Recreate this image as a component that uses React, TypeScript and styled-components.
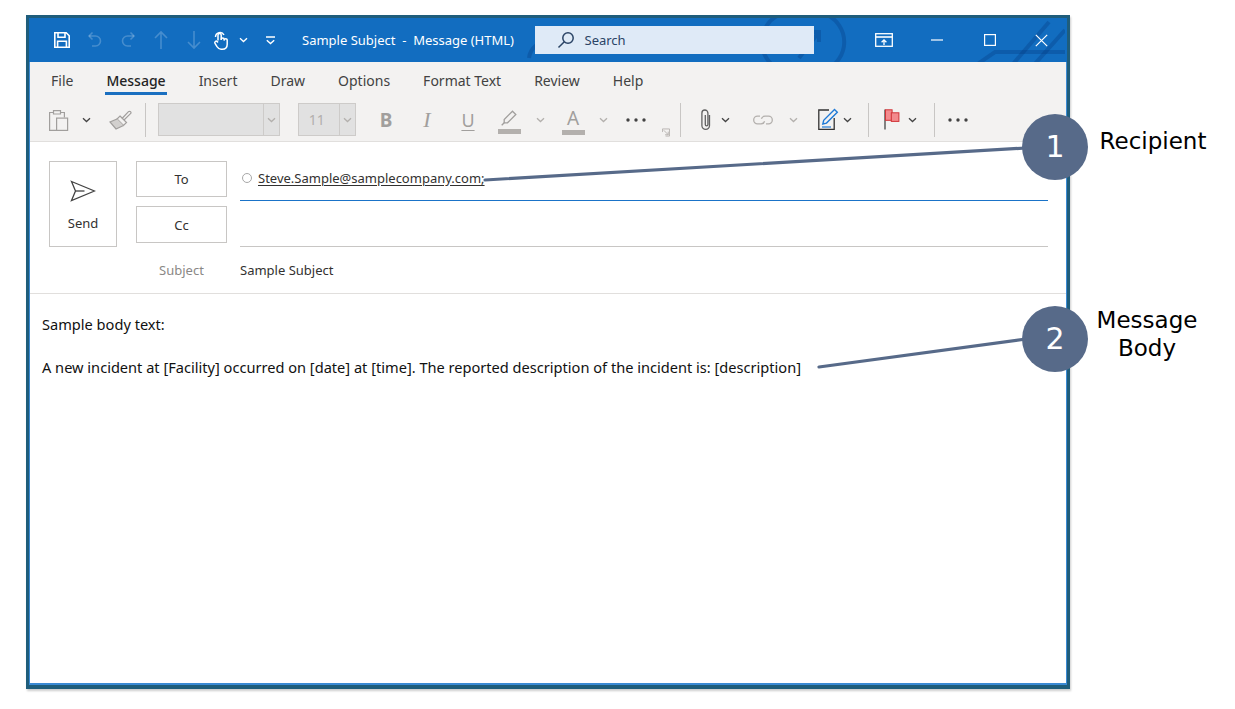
import React from "react";
import styled, { createGlobalStyle } from "styled-components";

const GlobalStyle = createGlobalStyle`
  html, body { margin: 0; padding: 0; background: #ffffff; }
  body { font-family: "Noto Sans", "Open Sans", sans-serif; color: #323130; }
  * { box-sizing: border-box; }
`;

const Page = styled.div`
  position: relative;
  width: 1235px;
  height: 709px;
  overflow: hidden;
  padding: 15px 0 0 26px;
`;

const Window = styled.div`
  width: 1044px;
  height: 674px;
  border: 3px solid #1f5d7b;
  border-bottom-width: 4px;
  display: flex;
  flex-direction: column;
  background: #ffffff;
  box-shadow: 1px 2px 2px rgba(0, 0, 0, 0.2);
`;

const Inner = styled.div`
  flex: 1;
  display: flex;
  flex-direction: column;
  border: 1px solid #3b8ad4;
  border-top: 0;
  border-bottom-width: 2px;
  min-height: 0;
`;

/* ---------- title bar ---------- */
const TitleBar = styled.div`
  position: relative;
  height: 44px;
  flex: none;
  display: flex;
  align-items: center;
  background: #126dc0;
  color: #ffffff;
  padding-left: 16.5px;
  overflow: hidden;
`;

const TitleArt = styled.svg`
  position: absolute;
  left: 0;
  top: 0;
  pointer-events: none;
`;

const QuickSlot = styled.div<{ $w: number }>`
  position: relative;
  width: ${(p) => p.$w}px;
  flex: none;
  height: 100%;
  display: flex;
  align-items: center;
  justify-content: center;
`;

const TitleText = styled.div`
  position: relative;
  width: 247px;
  flex: none;
  padding-left: 14.5px;
  font-size: 13px;
  white-space: pre;
  color: #ffffff;
`;

const SearchBox = styled.div`
  position: relative;
  width: 279px;
  height: 28px;
  flex: none;
  display: flex;
  align-items: center;
  background: #dfeaf7;
  padding-left: 22px;
  gap: 10px;
  color: #2b4466;
  font-size: 13px;
`;

const Grow = styled.div`
  flex: 1;
`;

/* ---------- ribbon ---------- */
const TabsRow = styled.div`
  height: 36px;
  flex: none;
  display: flex;
  align-items: center;
  gap: 33px;
  padding-left: 21px;
  background: #f3f2f1;
`;

const Tab = styled.div<{ $active?: boolean }>`
  position: relative;
  font-size: 14px;
  line-height: 19px;
  color: ${(p) => (p.$active ? "#242424" : "#424242")};
  font-weight: ${(p) => (p.$active ? 500 : 400)};
  &::after {
    content: "";
    display: ${(p) => (p.$active ? "block" : "none")};
    position: absolute;
    left: -1px;
    right: -1px;
    bottom: -5px;
    height: 3px;
    background: #1a6fc0;
  }
`;

const Toolbar = styled.div`
  height: 44px;
  flex: none;
  display: flex;
  align-items: center;
  padding-left: 14px;
  background: #f3f2f1;
  border-bottom: 1px solid #e1dfdd;
`;

const Slot = styled.div<{ $w: number; $ml?: number; $bottom?: boolean }>`
  width: ${(p) => p.$w}px;
  margin-left: ${(p) => p.$ml ?? 0}px;
  flex: none;
  height: 100%;
  display: flex;
  align-items: ${(p) => (p.$bottom ? "flex-end" : "center")};
  justify-content: center;
  padding-bottom: ${(p) => (p.$bottom ? 4 : 0)}px;
`;

const Separator = styled.div`
  width: 1px;
  height: 34px;
  background: #c8c6c4;
`;

const Combo = styled.div<{ $w: number; $ml: number }>`
  width: ${(p) => p.$w}px;
  margin-left: ${(p) => p.$ml}px;
  height: 33px;
  flex: none;
  display: flex;
  background: #e1e1e1;
  border: 1px solid #cdcbc9;
`;

const ComboValue = styled.div`
  flex: 1;
  display: flex;
  align-items: center;
  padding-left: 6px;
  font-size: 14px;
  color: #b3b0ad;
`;

const ComboArrow = styled.div`
  width: 16px;
  flex: none;
  display: flex;
  align-items: center;
  justify-content: center;
  border-left: 1px solid #cdcbc9;
`;

const GlyphB = styled.span`
  font-family: "Noto Sans", sans-serif;
  font-weight: 700;
  font-size: 19px;
  color: #a19f9d;
`;

const GlyphI = styled.span`
  font-family: "Liberation Serif", serif;
  font-style: italic;
  font-size: 22px;
  color: #a19f9d;
`;

const GlyphU = styled.span`
  font-family: "Noto Sans", sans-serif;
  font-size: 18px;
  color: #a19f9d;
  text-decoration: underline;
  text-underline-offset: 3px;
  text-decoration-thickness: 1px;
`;

const ColorTool = styled.div`
  display: flex;
  flex-direction: column;
  align-items: center;
  width: 23px;
  margin-top: 4px;
`;

const ColorLetter = styled.span`
  font-family: "Noto Sans", sans-serif;
  font-size: 19px;
  line-height: 20px;
  color: #a19f9d;
`;

const ColorBar = styled.div`
  width: 23px;
  height: 5px;
  background: #b3b0ad;
  margin-top: 2px;
`;

/* ---------- header ---------- */
const Header = styled.div`
  flex: none;
  display: grid;
  grid-template-columns: 87px 104px 1fr;
  grid-template-rows: 40px 46px 46px;
  padding: 19px 18px 0 19px;
  border-bottom: 1px solid #e1dfdd;
`;

const SendButton = styled.div`
  grid-row: 1 / span 2;
  grid-column: 1;
  width: 68px;
  height: 86px;
  border: 1px solid #c8c6c4;
  display: flex;
  flex-direction: column;
  align-items: center;
  padding-top: 18px;
`;

const SendLabel = styled.div`
  margin-top: 12px;
  font-size: 13px;
  line-height: 18px;
  color: #323130;
`;

const AddrButton = styled.div<{ $row: number; $h: number; $mt: number }>`
  grid-column: 2;
  grid-row: ${(p) => p.$row};
  width: 91px;
  height: ${(p) => p.$h}px;
  margin-top: ${(p) => p.$mt}px;
  border: 1px solid #c8c6c4;
  display: flex;
  align-items: center;
  justify-content: center;
  font-size: 13px;
  color: #323130;
`;

const AddrField = styled.div<{ $row: number; $line: string }>`
  grid-column: 3;
  grid-row: ${(p) => p.$row};
  border-bottom: 1px solid ${(p) => p.$line};
  display: flex;
  align-items: center;
  padding-bottom: 6px;
  padding-left: 2px;
  gap: 6px;
`;

const Presence = styled.span`
  width: 10px;
  height: 10px;
  border-radius: 50%;
  border: 1px solid #a8a8a8;
  flex: none;
`;

const EmailText = styled.span`
  font-size: 13px;
  color: #323130;
  text-decoration: underline;
  text-underline-offset: 2px;
`;

const SubjectLabel = styled.div`
  grid-column: 2;
  grid-row: 3;
  width: 91px;
  display: flex;
  align-items: center;
  justify-content: center;
  font-size: 13px;
  color: #8a8886;
`;

const SubjectValue = styled.div`
  grid-column: 3;
  grid-row: 3;
  display: flex;
  align-items: center;
  font-size: 13px;
  color: #323130;
`;

/* ---------- body ---------- */
const Body = styled.div`
  flex: 1;
  padding: 20px 12px;
  font-family: "Noto Sans", sans-serif;
  font-size: 14.6px;
  line-height: 20px;
  color: #111111;
`;

const Para = styled.p<{ $mt?: number }>`
  margin: ${(p) => p.$mt ?? 0}px 0 0 0;
`;

/* ---------- annotations ---------- */
const Overlay = styled.svg`
  position: absolute;
  left: 0;
  top: 0;
  pointer-events: none;
`;

const Badge = styled.div<{ $left: number; $top: number }>`
  position: absolute;
  left: ${(p) => p.$left}px;
  top: ${(p) => p.$top}px;
  width: 66px;
  height: 66px;
  border-radius: 50%;
  background: #576a89;
  color: #ffffff;
  display: flex;
  align-items: center;
  justify-content: center;
  font-family: "DejaVu Sans", Verdana, sans-serif;
  font-size: 30px;
  line-height: 1;
`;

const Callout = styled.div<{ $left: number; $top: number; $w: number }>`
  position: absolute;
  left: ${(p) => p.$left}px;
  top: ${(p) => p.$top}px;
  width: ${(p) => p.$w}px;
  text-align: center;
  font-family: "DejaVu Sans", Verdana, sans-serif;
  font-size: 23px;
  line-height: 28px;
  color: #000000;
`;

/* ---------- icons ---------- */
const dis = "rgba(255,255,255,0.22)";

const Chevron = ({ c = "#444" }: { c?: string }) => (
  <svg width="9" height="6" viewBox="0 0 9 6" fill="none" stroke={c} strokeWidth="1.3">
    <path d="M1 1.2l3.5 3.3L8 1.2" />
  </svg>
);

const Dots = () => (
  <svg width="22" height="4" viewBox="0 0 22 4" fill="#424242">
    <circle cx="3" cy="2" r="1.7" />
    <circle cx="11" cy="2" r="1.7" />
    <circle cx="19" cy="2" r="1.7" />
  </svg>
);

export default function App() {
  return (
    <>
      <GlobalStyle />
      <Page>
        <Window>
          <TitleBar>
            <TitleArt width="1036" height="44" viewBox="0 0 1036 44" fill="none" stroke="rgba(0,50,120,0.28)" strokeWidth="4">
              <path d="M752 -4 A30 30 0 0 0 752 52" />
              <path d="M796 -4 A30 30 0 0 1 796 52" />
              <path d="M770 40 L790 14 M780 14 h10 v10" />
              <path d="M500 40 A18 18 0 0 1 520 24" />
              <path d="M940 52 L966 34 H1036" />
              <path d="M984 46 L1020 4 M1004 48 L1036 12" />
            </TitleArt>
            <QuickSlot $w={33}>
              <svg width="18" height="18" viewBox="0 0 18 18" fill="none" stroke="#fff" strokeWidth="1.6">
                <path d="M1.8 1.8h11.4l3 3v11.4H1.8z" />
                <path d="M5 1.8v4.4h7V1.8" />
                <path d="M4.6 16.2v-6h8.8v6" />
              </svg>
            </QuickSlot>
            <QuickSlot $w={33}>
              <svg width="18" height="18" viewBox="0 0 18 18" fill="none" stroke={dis} strokeWidth="1.6">
                <path d="M6.5 1.5L3 5l3.5 3.5" />
                <path d="M3 5h6.5a5 5 0 0 1 0 10H6" />
              </svg>
            </QuickSlot>
            <QuickSlot $w={33}>
              <svg width="18" height="18" viewBox="0 0 18 18" fill="none" stroke={dis} strokeWidth="1.6">
                <path d="M11.5 1.5L15 5l-3.5 3.5" />
                <path d="M15 5H8.5a5 5 0 0 0 0 10H12" />
              </svg>
            </QuickSlot>
            <QuickSlot $w={33}>
              <svg width="16" height="20" viewBox="0 0 16 20" fill="none" stroke={dis} strokeWidth="1.6">
                <path d="M8 19V2M2 8l6-6 6 6" />
              </svg>
            </QuickSlot>
            <QuickSlot $w={33}>
              <svg width="16" height="20" viewBox="0 0 16 20" fill="none" stroke={dis} strokeWidth="1.6">
                <path d="M8 1v17M2 12l6 6 6-6" />
              </svg>
            </QuickSlot>
            <QuickSlot $w={23}>
              <svg width="18" height="22" viewBox="0 0 18 22" fill="none" stroke="#fff" strokeWidth="1.5">
                <path d="M2.5 8a4.5 4.5 0 0 1 8.5-2" />
                <path d="M5 11.5V6a1.6 1.6 0 0 1 3.2 0v5" />
                <path d="M8.2 10.5a1.5 1.5 0 0 1 3 0v1" />
                <path d="M11.2 11.2a1.5 1.5 0 0 1 3 0v4c0 3-2 5-5 5H8c-1.8 0-3-1-4-2.5L2 14.3a1.4 1.4 0 0 1 2.2-1.7L5 13.5" />
              </svg>
            </QuickSlot>
            <QuickSlot $w={19}>
              <Chevron c="#ffffff" />
            </QuickSlot>
            <QuickSlot $w={35}>
              <svg width="11" height="9" viewBox="0 0 11 9" fill="none" stroke="#fff" strokeWidth="1.4">
                <path d="M1 1h9M1.8 4.2l3.7 3.3 3.7-3.3" />
              </svg>
            </QuickSlot>
            <TitleText>Sample Subject  -  Message (HTML)</TitleText>
            <SearchBox>
              <svg width="18" height="18" viewBox="0 0 18 18" fill="none" stroke="#2b4466" strokeWidth="1.5">
                <circle cx="11" cy="7" r="5.2" />
                <path d="M7.3 10.7L1.5 16.5" />
              </svg>
              <span>Search</span>
            </SearchBox>
            <Grow />
            <QuickSlot $w={53}>
              <svg width="18" height="14" viewBox="0 0 18 14" fill="none" stroke="#fff" strokeWidth="1.3">
                <rect x="0.7" y="0.7" width="16.6" height="12.6" />
                <path d="M0.7 4h16.6" strokeWidth="1.6" />
                <path d="M9 12V6.8M6.6 9.2L9 6.8l2.4 2.4" />
              </svg>
            </QuickSlot>
            <QuickSlot $w={53}>
              <svg width="12" height="2" viewBox="0 0 12 2" fill="none" stroke="#fff" strokeWidth="1.2">
                <path d="M0 1h12" />
              </svg>
            </QuickSlot>
            <QuickSlot $w={53}>
              <svg width="12" height="12" viewBox="0 0 12 12" fill="none" stroke="#fff" strokeWidth="1.2">
                <rect x="0.6" y="0.6" width="10.8" height="10.8" />
              </svg>
            </QuickSlot>
            <QuickSlot $w={51}>
              <svg width="13" height="13" viewBox="0 0 13 13" fill="none" stroke="#fff" strokeWidth="1.2">
                <path d="M0.8 0.8l11.4 11.4M12.2 0.8L0.8 12.2" />
              </svg>
            </QuickSlot>
          </TitleBar>

          <Inner>
            <TabsRow>
              <Tab>File</Tab>
              <Tab $active>Message</Tab>
              <Tab>Insert</Tab>
              <Tab>Draw</Tab>
              <Tab>Options</Tab>
              <Tab>Format Text</Tab>
              <Tab>Review</Tab>
              <Tab>Help</Tab>
            </TabsRow>

            <Toolbar>
              <Slot $w={28}>
                <svg width="21" height="22" viewBox="0 0 21 22" fill="none" stroke="#a19f9d" strokeWidth="1.2">
                  <path d="M5.5 3.5H1.6v17.9H8" />
                  <path d="M12.5 3.5h3.9v5" />
                  <path d="M5.5 1.6h7v3.4h-7z" />
                  <rect x="8.6" y="9.1" width="11" height="12.3" />
                </svg>
              </Slot>
              <Slot $w={28}>
                <Chevron />
              </Slot>
              <Slot $w={40}>
                <svg width="24" height="22" viewBox="0 0 24 22" fill="none" stroke="#a19f9d" strokeWidth="1.2">
                  <path d="M14 9.5l6.5-6.8a1.4 1.4 0 0 1 2 2L16 11" />
                  <path d="M12 7l6.5 6.5-3 3L9 10z" />
                  <path d="M9 10L2 13l6 7 7.5-3.5" fill="#d2d0ce" />
                </svg>
              </Slot>
              <Slot $w={10}>
                <Separator />
              </Slot>
              <Combo $w={122} $ml={8}>
                <ComboValue />
                <ComboArrow>
                  <Chevron c="#b3b0ad" />
                </ComboArrow>
              </Combo>
              <Combo $w={58} $ml={18}>
                <ComboValue>&nbsp;11</ComboValue>
                <ComboArrow>
                  <Chevron c="#b3b0ad" />
                </ComboArrow>
              </Combo>
              <Slot $w={40} $ml={10}>
                <GlyphB>B</GlyphB>
              </Slot>
              <Slot $w={42}>
                <GlyphI>I</GlyphI>
              </Slot>
              <Slot $w={40}>
                <GlyphU>U</GlyphU>
              </Slot>
              <Slot $w={42}>
                <ColorTool>
                  <svg width="20" height="18" viewBox="0 0 20 18" fill="none" stroke="#a19f9d" strokeWidth="1.3">
                    <path d="M13.5 2.2l3.3 3.3-8.3 8.3H5.2v-3.3z" />
                    <path d="M5.2 13.8l-2.5 2.5" />
                  </svg>
                  <ColorBar />
                </ColorTool>
              </Slot>
              <Slot $w={20}>
                <Chevron c="#b3b0ad" />
              </Slot>
              <Slot $w={46}>
                <ColorTool>
                  <ColorLetter>A</ColorLetter>
                  <ColorBar />
                </ColorTool>
              </Slot>
              <Slot $w={14}>
                <Chevron c="#b3b0ad" />
              </Slot>
              <Slot $w={52}>
                <Dots />
              </Slot>
              <Slot $w={8} $bottom>
                <svg width="9" height="9" viewBox="0 0 9 9" fill="none" stroke="#b3b0ad" strokeWidth="1">
                  <path d="M0.5 4V0.5h8v8H4" />
                  <path d="M2 2l5 5M7 3.5V7H3.5" />
                </svg>
              </Slot>
              <Slot $w={20}>
                <Separator />
              </Slot>
              <Slot $w={24} $ml={4}>
                <svg width="12" height="23" viewBox="0 0 12 23" fill="none" stroke="#616161" strokeWidth="1.3">
                  <path d="M9.5 7v10.5a3.8 3.8 0 0 1-7.6 0V5a3 3 0 0 1 6 0v11.5a1.3 1.3 0 0 1-2.6 0V7" />
                </svg>
              </Slot>
              <Slot $w={14}>
                <Chevron />
              </Slot>
              <Slot $w={34} $ml={14}>
                <svg width="24" height="14" viewBox="0 0 24 14" fill="none" stroke="#b3b0ad" strokeWidth="1.3">
                  <path d="M9 3.2H6.5a3.8 3.8 0 0 0 0 7.6H10a3.8 3.8 0 0 0 3.6-2.6" />
                  <path d="M15 10.8h2.5a3.8 3.8 0 0 0 0-7.6H14a3.8 3.8 0 0 0-3.6 2.6" />
                </svg>
              </Slot>
              <Slot $w={26}>
                <Chevron c="#b3b0ad" />
              </Slot>
              <Slot $w={28} $ml={8}>
                <svg width="22" height="23" viewBox="0 0 22 23" fill="none">
                  <path d="M12 2H1.8v19.4h15.4V10" stroke="#333" strokeWidth="1.3" />
                  <path d="M17.5 1.5l2.8 2.8L9.5 15.1l-3.7 0.9 0.9-3.7z" stroke="#1f7ad6" strokeWidth="1.4" />
                  <path d="M5 19h9" stroke="#1f7ad6" strokeWidth="1.2" />
                </svg>
              </Slot>
              <Slot $w={10}>
                <Chevron />
              </Slot>
              <Slot $w={32}>
                <Separator />
              </Slot>
              <Slot $w={16}>
                <svg width="16" height="21" viewBox="0 0 16 21" fill="none">
                  <path d="M1 0.5v20" stroke="#444" strokeWidth="1.3" />
                  <rect x="1.5" y="0.8" width="6.6" height="10.5" fill="#f38a8d" stroke="#d13438" strokeWidth="1" />
                  <rect x="7.3" y="3.8" width="7.6" height="8.6" fill="#f38a8d" stroke="#d13438" strokeWidth="1" />
                </svg>
              </Slot>
              <Slot $w={24}>
                <Chevron />
              </Slot>
              <Slot $w={20}>
                <Separator />
              </Slot>
              <Slot $w={28}>
                <Dots />
              </Slot>
            </Toolbar>

            <Header>
              <SendButton>
                <svg width="26" height="22" viewBox="0 0 26 22" fill="none" stroke="#424242" strokeWidth="1.3">
                  <path d="M1.5 1.5L24.5 11 1.5 20.5 5.5 11z" />
                  <path d="M5.5 11h9" />
                </svg>
                <SendLabel>Send</SendLabel>
              </SendButton>
              <AddrButton $row={1} $h={36} $mt={0}>To</AddrButton>
              <AddrButton $row={2} $h={37} $mt={5}>Cc</AddrButton>
              <AddrField $row={1} $line="#1a73c8">
                <Presence />
                <EmailText>Steve.Sample@samplecompany.com;</EmailText>
              </AddrField>
              <AddrField $row={2} $line="#c8c6c4" />
              <SubjectLabel>Subject</SubjectLabel>
              <SubjectValue>Sample Subject</SubjectValue>
            </Header>

            <Body>
              <Para>Sample body text:</Para>
              <Para $mt={23}>
                A new incident at [Facility] occurred on [date] at [time]. The reported description of the incident is: [description]
              </Para>
            </Body>
          </Inner>
        </Window>

        <Overlay width="1235" height="709" viewBox="0 0 1235 709">
          <path d="M485 180 L1026 148" stroke="#576a89" strokeWidth="3.2" strokeLinecap="round" />
          <path d="M819 367 L1026 339" stroke="#576a89" strokeWidth="3.2" strokeLinecap="round" />
        </Overlay>
        <Badge $left={1022} $top={114}>1</Badge>
        <Callout $left={1092} $top={127} $w={122}>Recipient</Callout>
        <Badge $left={1022} $top={306}>2</Badge>
        <Callout $left={1094} $top={306} $w={106}>
          Message
          <br />
          Body
        </Callout>
      </Page>
    </>
  );
}
